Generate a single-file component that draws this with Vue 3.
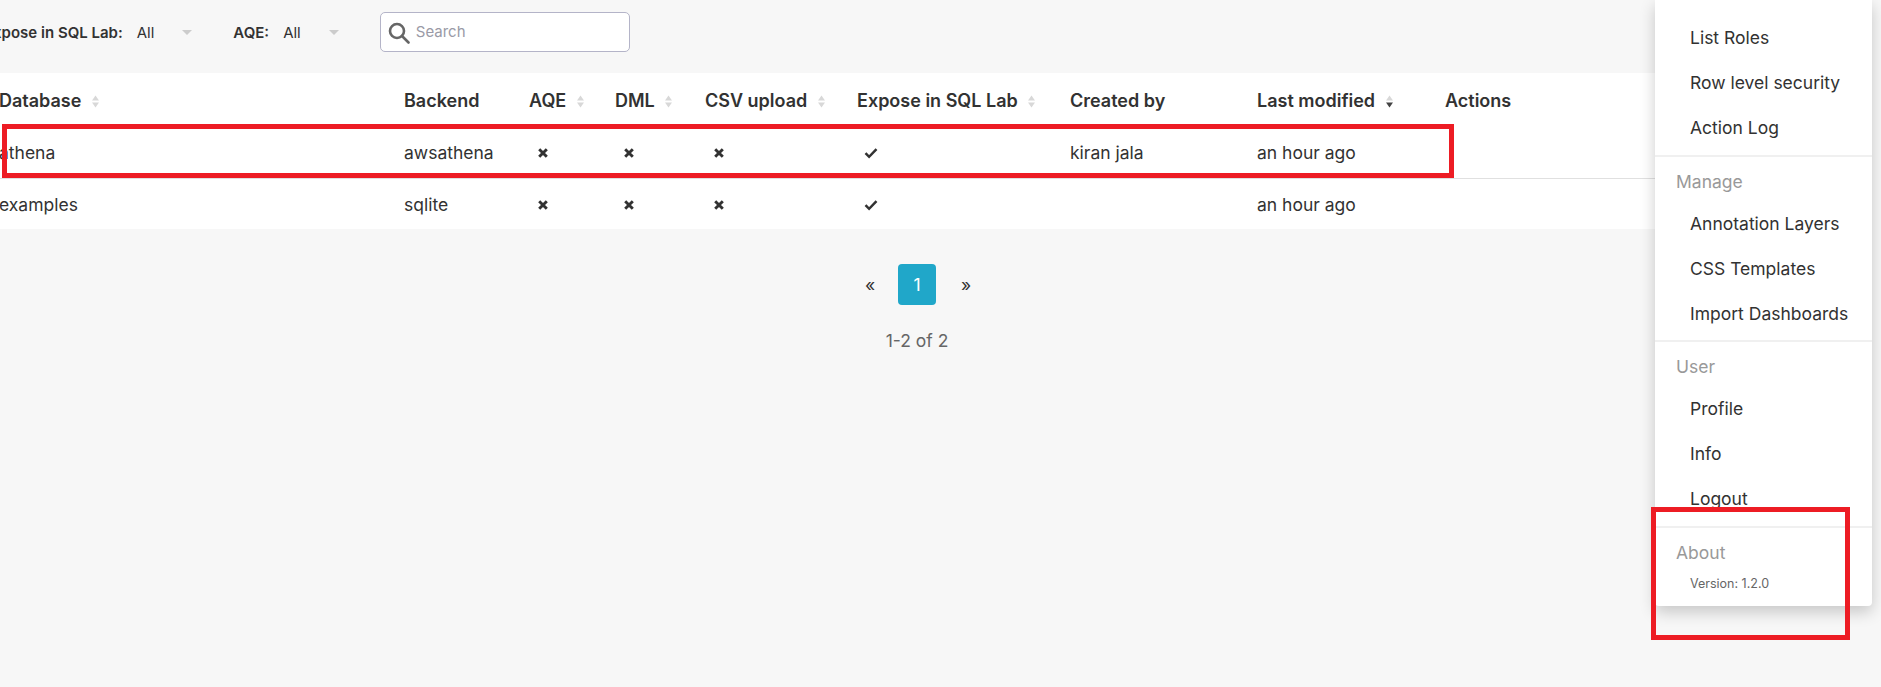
<script setup>
const columns = [
  { label: 'Database', sort: true },
  { label: 'Backend' },
  { label: 'AQE', sort: true },
  { label: 'DML', sort: true },
  { label: 'CSV upload', sort: true },
  { label: 'Expose in SQL Lab', sort: true },
  { label: 'Created by' },
  { label: 'Last modified', sort: true, active: true },
  { label: 'Actions' }
]
const rows = [
  { name: 'athena', backend: 'awsathena', by: 'kiran jala', when: 'an hour ago' },
  { name: 'examples', backend: 'sqlite', by: '', when: 'an hour ago' }
]
const menu = [
  { items: ['List Roles', 'Row level security', 'Action Log'] },
  { title: 'Manage', items: ['Annotation Layers', 'CSS Templates', 'Import Dashboards'] },
  { title: 'User', items: ['Profile', 'Info', 'Logout'] }
]
</script>

<template>
  <div class="page">
    <div class="filters">
      <span class="f-label">Expose in SQL Lab:</span>
      <span class="f-value">All</span>
      <span class="f-caret"></span>
      <span class="f-label second">AQE:</span>
      <span class="f-value">All</span>
      <span class="f-caret"></span>
      <div class="search">
        <svg class="glass" width="22" height="22" viewBox="0 0 22 22" fill="none" stroke="#666" stroke-width="2.6"><circle cx="9" cy="9" r="7"/><path d="M14 14l6.5 6.5" stroke-linecap="round"/></svg>
        <span class="placeholder">Search</span>
      </div>
    </div>

    <div class="table">
      <div class="row head">
        <div v-for="c in columns" :key="c.label" class="cell">
          {{ c.label }}
          <svg v-if="c.sort" class="sort" width="7" height="13" viewBox="0 0 7 13">
            <path d="M3.5 .5L7 5.4H0z" fill="#d8d8d8"/>
            <path d="M3.5 12.5L7 7.6H0z" :fill="c.active ? '#444' : '#d8d8d8'"/>
          </svg>
        </div>
      </div>
      <div v-for="r in rows" :key="r.name" class="row body">
        <div class="cell">{{ r.name }}</div>
        <div class="cell">{{ r.backend }}</div>
        <div v-for="n in 3" :key="n" class="cell">
          <svg class="mark" width="12" height="12" viewBox="0 0 12 12"><path d="M2.2 2.2l7.6 7.6M9.8 2.2l-7.6 7.6" stroke="#323232" stroke-width="2.9" fill="none"/></svg>
        </div>
        <div class="cell">
          <svg class="check" width="14" height="12" viewBox="0 0 14 12"><path d="M1.5 6.2l3.6 3.6 7.4-7.6" stroke="#323232" stroke-width="2.5" fill="none"/></svg>
        </div>
        <div class="cell">{{ r.by }}</div>
        <div class="cell">{{ r.when }}</div>
        <div class="cell"></div>
      </div>
    </div>

    <div class="pager">
      <span class="arrow">«</span>
      <span class="current">1</span>
      <span class="arrow">»</span>
    </div>
    <div class="count">1-2 of 2</div>

    <div class="menu">
      <div v-for="(g, i) in menu" :key="i" class="group">
        <div v-if="g.title" class="m-title">{{ g.title }}</div>
        <div v-for="it in g.items" :key="it" class="m-item">{{ it }}</div>
      </div>
      <div class="group last">
        <div class="m-title">About</div>
        <div class="m-version">Version: 1.2.0</div>
      </div>
    </div>

    <div class="mark-box row-box"></div>
    <div class="mark-box about-box"></div>
  </div>
</template>

<style>
html, body { margin: 0; padding: 0; background: #f7f7f7; overflow: hidden; }
</style>

<style scoped>
.page {
  position: relative;
  width: 1881px;
  height: 687px;
  overflow: hidden;
  background: #f7f7f7;
  font-family: Inter, "Liberation Sans", sans-serif;
  color: #323232;
}
.filters {
  height: 73px;
  display: flex;
  align-items: center;
  margin-left: -16px;
  padding-bottom: 9px;
  box-sizing: border-box;
  font-size: 15px;
}
.f-label { font-weight: 600; margin-right: 14px; }
.f-label.second { margin-left: 41px; }
.f-caret {
  margin-left: 28px;
  border-left: 5px solid transparent;
  border-right: 5px solid transparent;
  border-top: 5px solid #ccc;
}
.search {
  margin-left: 41px;
  width: 250px;
  height: 40px;
  box-sizing: border-box;
  border: 1px solid #b4b4c8;
  border-radius: 5px;
  background: #fff;
  display: flex;
  align-items: center;
  padding-left: 7px;
}
.glass { flex: none; margin-top: 2px; }
.placeholder { margin-left: 6px; padding-bottom: 2px; color: #9a9aa6; font-size: 15px; }
.table { background: #fff; width: 1660px; }
.row {
  display: grid;
  grid-template-columns: 404px 125px 86px 90px 152px 213px 187px 188px 1fr;
  align-items: center;
}
.row .cell:first-child { margin-left: -1px; }
.head { height: 47px; padding-top: 4px; font-weight: 600; font-size: 18px; }
.body { font-size: 17.5px; }
.body:nth-child(2) { height: 52px; padding-top: 2px; border-bottom: 1px solid #e0e0e0; }
.body:nth-child(3) { height: 50px; }
.cell { white-space: nowrap; }
.sort { margin-left: 6px; vertical-align: -1px; }
.mark { margin-left: 8px; }
.check { margin-left: 7px; }
.pager {
  margin-top: 35px;
  width: 1834px;
  display: flex;
  justify-content: center;
  align-items: center;
  height: 41px;
  gap: 25px;
  font-size: 17.5px;
}
.arrow { width: 8px; text-align: center; }
.current {
  width: 38px;
  height: 41px;
  border-radius: 4px;
  background: #20a7c9;
  color: #fff;
  display: flex;
  align-items: center;
  justify-content: center;
}
.count {
  margin-top: 25px;
  width: 1834px;
  text-align: center;
  font-size: 17.5px;
  color: #666;
}
.menu {
  position: absolute;
  top: 0;
  left: 1655px;
  width: 217px;
  height: 606px;
  box-sizing: border-box;
  padding-top: 15px;
  background: #fff;
  border-radius: 0 0 4px 4px;
  box-shadow: 0 6px 16px rgba(0, 0, 0, 0.2);
  font-size: 17.5px;
}
.group { border-bottom: 2px solid #f0f0f0; padding-bottom: 5px; }
.group:nth-child(2) { padding-bottom: 4px; }
.group.last { border-bottom: 0; }
.m-title { color: #999; padding-left: 21px; height: 40px; line-height: 42px; margin-top: 4px; }
.m-item { padding-left: 35px; height: 45px; line-height: 45px; }
.m-version { padding-left: 35px; font-size: 12.5px; color: #666; line-height: 20px; margin-top: 2px; }
.mark-box { position: absolute; border: 5px solid #ed1c24; box-sizing: border-box; }
.row-box { left: 2px; top: 124px; width: 1452px; height: 54px; }
.about-box { left: 1651px; top: 507px; width: 199px; height: 133px; }
</style>
